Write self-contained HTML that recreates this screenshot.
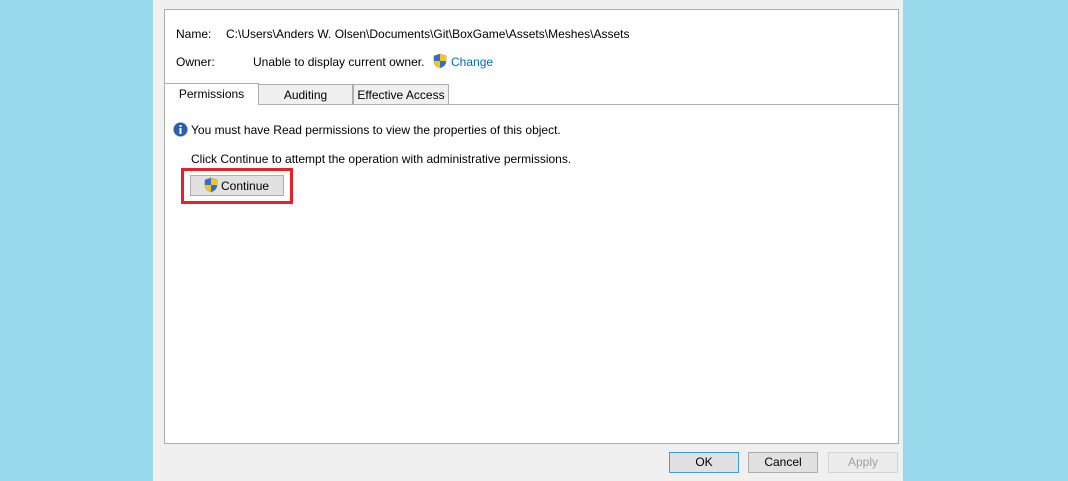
<!DOCTYPE html>
<html><head><style>
body{margin:0;width:1068px;height:481px;background:#97d9ea;position:relative;overflow:hidden;font-family:"Liberation Sans",sans-serif;font-size:12px;color:#000}
.abs{position:absolute}
.win{left:153px;top:0;width:750px;height:481px;background:#f0f0f0}
.panel{left:164px;top:9px;width:733px;height:433px;background:#fff;border:1px solid #adadad}
.line{left:164px;top:104px;width:735px;height:1px;background:#adadad}
.tab{top:84px;height:20px;background:#f0f0f0;border:1px solid #adadad;border-bottom:none;text-align:center;line-height:20px;box-sizing:border-box}
.btn{top:452px;height:21px;width:70px;border:1px solid #adadad;background:#e1e1e1;text-align:center;line-height:19px;box-sizing:border-box}
.t{white-space:nowrap}
.blue{color:#0066cc}
</style></head><body>
<div class="abs win"></div>
<div class="abs panel"></div>
<div class="abs line"></div>
<div class="abs t" style="left:176px;top:27px">Name:</div>
<div class="abs t" style="left:226px;top:27px">C:\Users\Anders W. Olsen\Documents\Git\BoxGame\Assets\Meshes\Assets</div>
<div class="abs t" style="left:176px;top:55px">Owner:</div>
<div class="abs t" style="left:253px;top:55px">Unable to display current owner.</div>
<svg class="abs" style="left:433px;top:53px" width="14" height="16" viewBox="0 0 14 16"><path d="M7 1 L13 3 V8 C13 12 10 14 7 15 C4 14 1 12 1 8 V3 Z" fill="#2f6fd0" stroke="#777" stroke-width=".6"/><path d="M7 1 L13 3 V8 H7Z M7 8 H1 C1 12 4 14 7 15Z" fill="#f5c518"/></svg>
<div class="abs t blue" style="left:451px;top:55px">Change</div>
<div class="abs tab" style="left:164px;top:83px;height:22px;width:95px;background:#fff;z-index:2">Permissions</div>
<div class="abs tab" style="left:258px;width:95px">Auditing</div>
<div class="abs tab" style="left:353px;width:96px">Effective Access</div>
<svg class="abs" style="left:173px;top:122px" width="15" height="15" viewBox="0 0 15 15"><circle cx="7.5" cy="7.5" r="7" fill="#2a5db8" stroke="#8aa" stroke-width=".6"/><rect x="6.5" y="6" width="2" height="6" fill="#fff"/><rect x="6.5" y="3" width="2" height="2" fill="#fff"/></svg>
<div class="abs t" style="left:191px;top:123px">You must have Read permissions to view the properties of this object.</div>
<div class="abs t" style="left:191px;top:152px">Click Continue to attempt the operation with administrative permissions.</div>
<div class="abs" style="left:181px;top:168px;width:112px;height:36px;box-sizing:border-box;border:3px solid #e8202a"></div>
<div class="abs" style="left:190px;top:175px;width:94px;height:21px;box-sizing:border-box;border:1px solid #adadad;background:#e1e1e1"></div>
<svg class="abs" style="left:204px;top:177px" width="14" height="16" viewBox="0 0 14 16"><path d="M7 1 L13 3 V8 C13 12 10 14 7 15 C4 14 1 12 1 8 V3 Z" fill="#2f6fd0" stroke="#777" stroke-width=".6"/><path d="M7 1 L13 3 V8 H7Z M7 8 H1 C1 12 4 14 7 15Z" fill="#f5c518"/></svg>
<div class="abs t" style="left:221px;top:179px">Continue</div>
<div class="abs btn" style="left:669px;border-color:#3c9ae6">OK</div>
<div class="abs btn" style="left:748px">Cancel</div>
<div class="abs btn" style="left:828px;color:#a0a0a0;background:#ececec;border-color:#d4d4d4">Apply</div>
</body></html>
